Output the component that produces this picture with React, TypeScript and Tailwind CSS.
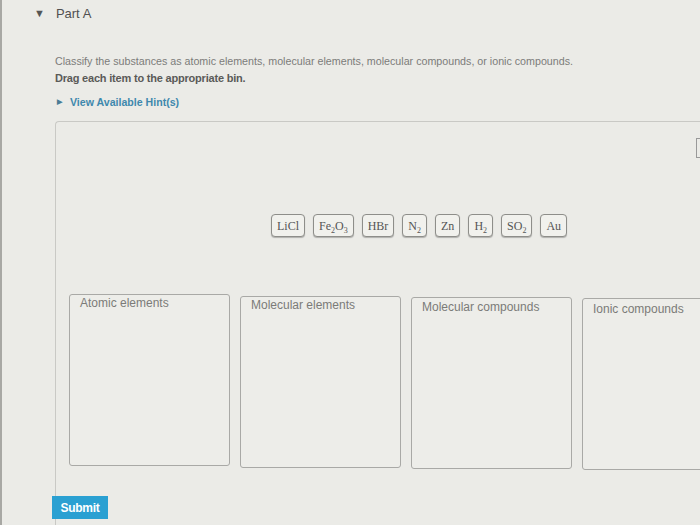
import React from "react";

const chips: { base: string; parts?: [string, string][] }[] = [
  { base: "LiCl" },
  { base: "", parts: [["Fe", "2"], ["O", "3"]] },
  { base: "HBr" },
  { base: "", parts: [["N", "2"]] },
  { base: "Zn" },
  { base: "", parts: [["H", "2"]] },
  { base: "", parts: [["SO", "2"]] },
  { base: "Au" },
];

function Chip({ c }: { c: (typeof chips)[number] }) {
  return (
    <div className="h-[23px] px-[5px] flex items-center rounded-[4px] border border-[#8e8e8a] bg-[#f1f1ed] shadow-[0_1px_1px_rgba(0,0,0,0.25)] text-[12px] text-[#555] leading-none" style={{ fontFamily: '"Liberation Serif", serif' }}>
      {c.parts ? (
        c.parts.map(([a, b], i) => (
          <span key={i}>
            {a}
            <sub className="text-[8px] align-[-1px]">{b}</sub>
          </span>
        ))
      ) : (
        <span>{c.base}</span>
      )}
    </div>
  );
}

function Bin({ label, extra }: { label: string; extra?: string }) {
  return (
    <div className={`w-[161px] h-[172px] shrink-0 rounded-[3px] border border-[#a9a9a6] bg-[#edede9] px-[10px] text-[12px] leading-[14px] text-[#7b7b78] ${extra ?? ""}`}>
      {label}
    </div>
  );
}

export default function App() {
  return (
    <div className="w-[700px] h-[525px] overflow-hidden bg-[#ebebe7] border-l-2 border-[#a8a8a4] relative" style={{ fontFamily: '"Liberation Sans", Arial, sans-serif' }}>
      <div className="flex items-center pt-[5px] h-[22px]">
        <span className="ml-[32px] text-[11px] text-[#555]">▼</span>
        <span className="ml-[11px] text-[13px] text-[#505050]">Part A</span>
      </div>
      <div className="pl-[53px]">
        <p className="mt-[32px] text-[10.7px] text-[#7c7c7a] leading-[14px]">
          Classify the substances as atomic elements, molecular elements, molecular compounds, or ionic compounds.
        </p>
        <p className="mt-[3px] text-[11px] font-bold text-[#5a5a58] leading-[14px] tracking-[-0.2px]">
          Drag each item to the appropriate bin.
        </p>
        <div className="mt-[10px] flex items-center text-[10.6px] font-bold text-[#3e88ad] leading-[14px]">
          <span className="ml-[2px] text-[7px] text-[#4a7c95]">▶</span>
          <span className="ml-[8px]">View Available Hint(s)</span>
        </div>
        <div className="mt-[12px] border-t border-l border-[#c9c9c5] rounded-tl-[4px] h-[420px] pl-[13px]">
          <div className="flex gap-[8px] pt-[92px] pl-[202px]">
            {chips.map((c, i) => (
              <Chip key={i} c={c} />
            ))}
          </div>
          <div className="flex gap-[10px] mt-[57px]">
            <Bin label="Atomic elements" extra="pt-[1px]" />
            <Bin label="Molecular elements" extra="mt-[2px] pt-[1px]" />
            <Bin label="Molecular compounds" extra="mt-[3px] pt-[2px]" />
            <Bin label="Ionic compounds" extra="mt-[4px] pt-[3px]" />
          </div>
          <button className="mt-[26px] -ml-[17px] w-[56px] h-[23px] bg-[#2aa0d2] text-white text-[12px] font-bold tracking-[-0.3px]">
            Submit
          </button>
        </div>
      </div>
      <div className="absolute right-0 top-[138px] w-[4px] h-[20px] border border-r-0 border-[#999]" />
    </div>
  );
}
